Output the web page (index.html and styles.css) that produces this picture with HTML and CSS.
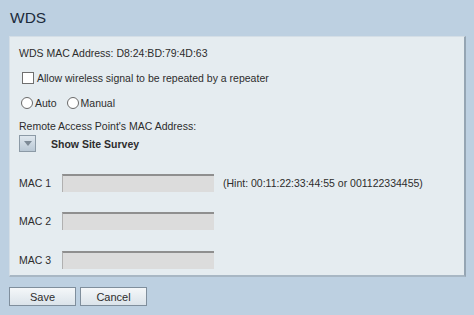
FILE: index.html
```html
<!DOCTYPE html>
<html lang="en">
<head>
    <meta charset="UTF-8">
    <title>WDS</title>
    <link rel="stylesheet" href="styles.css">
</head>
<body>

    <h1 class="page-title">WDS</h1>

    <div class="panel">
        <div class="row mac-info">WDS MAC Address: D8:24:BD:79:4D:63</div>

        <label class="row check-row">
            <span class="checkbox"></span>
            Allow wireless signal to be repeated by a repeater
        </label>

        <div class="row radio-row">
            <label class="radio-item"><span class="radio"></span>Auto</label>
            <label class="radio-item"><span class="radio"></span>Manual</label>
        </div>

        <div class="row remote-label">Remote Access Point's MAC Address:</div>

        <div class="survey-row">
            <span class="survey-btn">
                <svg width="8" height="5" viewBox="0 0 8 5"><polygon points="0,0 8,0 4,5" fill="#7d8a96"/></svg>
            </span>
            <span class="survey-text">Show Site Survey</span>
        </div>

        <!-- MAC entries -->
        <div class="mac-row first">
            <span class="mac-label">MAC 1</span>
            <input type="text" class="mac-input">
            <span class="hint">(Hint: 00:11:22:33:44:55 or 001122334455)</span>
        </div>
        <div class="mac-row">
            <span class="mac-label">MAC 2</span>
            <input type="text" class="mac-input">
        </div>
        <div class="mac-row last">
            <span class="mac-label">MAC 3</span>
            <input type="text" class="mac-input">
        </div>
    </div>

    <div class="button-group">
        <button>Save</button>
        <button>Cancel</button>
    </div>

</body>
</html>
```

FILE: styles.css
```css
body {
    font-family: "Liberation Sans", Arial, sans-serif;
    font-size: 10.5px;
    margin: 0;
    padding: 0 8px 0 9px;
    background-color: #bdd0e1;
    color: #2d2d2d;
    height: 315px;
    overflow: hidden;
}
.page-title {
    font-size: 15.5px;
    font-weight: normal;
    color: #1c2b3b;
    margin: 0;
    padding: 9px 0 0 1px;
    height: 36px;
    box-sizing: border-box;
}
.panel {
    background-color: #e5ecf0;
    border-top: 1px solid #d4dee6;
    border-left: 1px solid #d4dee6;
    border-right: 2px solid #95a5b3;
    border-bottom: 2px solid #a8b7c4;
    height: 241px;
    box-sizing: border-box;
    padding: 9px 9px 0 9px;
}
.row {
    display: flex;
    align-items: center;
    height: 13px;
}
.check-row {
    margin-top: 12px;
}
.checkbox {
    width: 10px;
    height: 10px;
    border: 1px solid #6f6f6f;
    background-color: #fff;
    margin: 0 3px 0 3px;
}
.radio-row {
    margin-top: 12px;
}
.radio-item {
    display: flex;
    align-items: center;
    margin-right: 8px;
}
.radio {
    width: 10px;
    height: 10px;
    border: 1px solid #6a6a6a;
    border-radius: 50%;
    background-color: #fff;
    margin: 0 2px 0 2px;
}
.remote-label {
    margin-top: 10px;
}
.survey-row {
    display: flex;
    align-items: center;
    margin-top: 3px;
}
.survey-btn {
    width: 15px;
    height: 15px;
    border: 1px solid #8c9aa6;
    background: linear-gradient(#dfe7ee, #b9c8d5);
    display: flex;
    justify-content: center;
    align-items: center;
}
.survey-text {
    font-weight: bold;
    margin-left: 15px;
}
.mac-row {
    display: flex;
    align-items: center;
    height: 18px;
    margin-top: 20px;
}
.mac-row.first {
    margin-top: 22px;
}
.mac-row.last {
    margin-top: 21px;
}
.mac-label {
    width: 43px;
}
.mac-input {
    width: 152px;
    height: 18px;
    box-sizing: border-box;
    margin: 0;
    padding: 0;
    border: none;
    border-top: 2px solid #8f8f8f;
    border-left: 1px solid #b0b0b0;
    background-color: #dcdcdc;
}
.hint {
    margin-left: 9px;
}
.button-group {
    display: flex;
    gap: 4px;
    margin-top: 10px;
}
button {
    font-family: "Liberation Sans", Arial, sans-serif;
    font-size: 11px;
    color: #2d2d2d;
    width: 67px;
    height: 19px;
    padding: 0;
    border: 1px solid #7f8e9c;
    background: linear-gradient(#f4f7f9, #dbe3ea);
    cursor: pointer;
}
```
